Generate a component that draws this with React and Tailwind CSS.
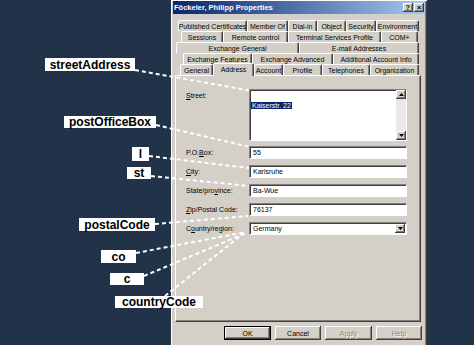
const TAB_ROWS = [
  { pad: 'pl-[7px]', tabs: [
    ['Published Certificates', 'w-[69px]'], ['Member Of', 'w-[41px]'], ['Dial-in', 'w-[29px]'],
    ['Object', 'w-[29px]'], ['Security', 'w-[30px]'], ['Environment', 'w-[43px]'],
  ] },
  { pad: 'pl-[10px]', tabs: [
    ['Sessions', 'w-[42px]'], ['Remote control', 'w-[65px]'], ['Terminal Services Profile', 'w-[93px]'], ['COM+', 'w-[37px]'],
  ] },
  { pad: 'pl-[5px]', tabs: [['Exchange General', 'w-[123px]'], ['E-mail Addresses', 'w-[120px]']] },
  { pad: 'pl-[12px]', tabs: [
    ['Exchange Features', 'w-[69px]'], ['Exchange Advanced', 'w-[81px]'], ['Additional Account Info', 'w-[86px]'],
  ] },
  { pad: 'pl-[9px]', tabs: [
    ['General', 'w-[33px]'], ['Address', 'w-[41px]', true], ['Account', 'w-[29px]'],
    ['Profile', 'w-[39px]'], ['Telephones', 'w-[48px]'], ['Organization', 'w-[49px]'],
  ] },
]

const LABELS = [
  { t: 'streetAddress', c: 'left-[45px] top-[58px] w-[90px] h-[13px]' },
  { t: 'postOfficeBox', c: 'left-[64px] top-[116px] w-[92px] h-[12px]' },
  { t: 'l', c: 'left-[132px] top-[147px] w-[17px] h-[14px]' },
  { t: 'st', c: 'left-[127px] top-[167px] w-[24px] h-[12px]' },
  { t: 'postalCode', c: 'left-[79px] top-[218px] w-[76px] h-[13px]' },
  { t: 'co', c: 'left-[101px] top-[250px] w-[35px] h-[13px]' },
  { t: 'c', c: 'left-[110px] top-[273px] w-[34px] h-[12px]' },
  { t: 'countryCode', c: 'left-[115px] top-[296px] w-[88px] h-[12px]' },
]

const LINES = [
  [135, 70, 252, 91],
  [156, 125, 250, 147],
  [149, 156, 249, 168],
  [151, 176, 249, 186],
  [155, 224, 248, 216],
  [136, 253, 246, 232],
  [144, 276, 246, 233],
  [165, 296, 244, 233],
]

const raised = 'bg-[#d4d0c8] shadow-[inset_-1px_-1px_0_#404040,inset_1px_1px_0_#fff,inset_-2px_-2px_0_#808080]'
const sunken = 'bg-white border border-t-[#808080] border-l-[#808080] border-b-white border-r-white shadow-[inset_1px_1px_0_#404040]'

function Field({ label, children, tall }) {
  return (
    <div className="flex">
      <div className={`w-[63px] text-[7px] leading-none ${tall ? 'pt-[3px]' : 'flex items-center'}`}>{label}</div>
      {children}
    </div>
  )
}

function Input({ value, combo }) {
  return (
    <div className={`w-[158px] h-[13px] flex items-center ${sunken}`}>
      <span className="flex-1 pl-[3px] text-[7px] leading-none text-black">{value}</span>
      {combo && (
        <div className={`w-[10px] h-[9px] mr-[1px] flex items-center justify-center ${raised}`}>
          <svg width="5" height="3" viewBox="0 0 5 3"><path d="M0 0h5L2.5 3z" fill="#000"/></svg>
        </div>
      )}
    </div>
  )
}

export default function App() {
  return (
    <div className="relative w-[474px] h-[345px] overflow-hidden bg-[#213249] font-['Liberation_Sans',Arial,sans-serif] text-black">
      {/* dialog */}
      <div className="ml-[171px] w-[256px] h-[345px] pt-[1px] flex flex-col bg-[#d4d0c8] shadow-[inset_1px_1px_0_#fff,inset_-1px_0_0_#404040,inset_-2px_0_0_#808080]">
        <div className="mx-[2px] h-[13px] flex items-center bg-gradient-to-r from-[#0a246a] to-[#a6caf0]">
          <span className="flex-1 pl-[1px] text-[7.5px] font-bold text-white leading-none">Föckeler, Philipp Properties</span>
          <div className={`w-[10px] h-[9px] flex items-center justify-center text-[7px] font-bold leading-none ${raised}`}>?</div>
          <div className={`w-[10px] h-[9px] ml-[1px] mr-[1px] flex items-center justify-center text-[8px] font-bold leading-none ${raised}`}>×</div>
        </div>

        <div className="mt-[6px] flex flex-col">
          {TAB_ROWS.map((row, i) => (
            <div key={i} className={`flex items-end h-[11px] ${row.pad}`}>
              {row.tabs.map(([name, w, sel]) => (
                <div
                  key={name}
                  className={`${w} flex items-center justify-center text-[7px] leading-none whitespace-nowrap bg-[#d4d0c8] rounded-t-[2px] border-l border-t border-white border-r border-r-[#404040] shadow-[inset_-1px_0_0_#808080] ${sel ? 'h-[13px] relative top-[1px] z-10 pb-[2px]' : 'h-[11px]'}`}
                >
                  {name}
                </div>
              ))}
            </div>
          ))}
        </div>

        <div className="ml-[4px] w-[246px] h-[247px] pt-[13px] pl-[10px] flex flex-col gap-[6px] border border-t-white border-l-white border-r-[#404040] border-b-[#404040] shadow-[inset_-1px_-1px_0_#808080]">
          <div className="mb-[-1px]">
            <Field label={<><u>S</u>treet:</>} tall>
              <div className={`w-[158px] h-[52px] flex ${sunken}`}>
                <div className="flex-1 pl-[1px] pt-[1px]">
                  <span className="bg-[#0a246a] text-white text-[7px] leading-none px-[1px]">Kaiserstr. 22</span>
                </div>
                <div className="w-[10px] flex flex-col bg-[#ebe9e5]">
                  <div className={`h-[9px] flex items-center justify-center ${raised}`}>
                    <svg width="5" height="3" viewBox="0 0 5 3"><path d="M0 3h5L2.5 0z" fill="#000"/></svg>
                  </div>
                  <div className="flex-1" />
                  <div className={`h-[9px] flex items-center justify-center ${raised}`}>
                    <svg width="5" height="3" viewBox="0 0 5 3"><path d="M0 0h5L2.5 3z" fill="#000"/></svg>
                  </div>
                </div>
              </div>
            </Field>
          </div>
          <Field label={<>P.O. <u>B</u>ox:</>}><Input value="55" /></Field>
          <Field label={<><u>C</u>ity:</>}><Input value="Karlsruhe" /></Field>
          <Field label={<>State/pro<u>v</u>ince:</>}><Input value="Ba-Wue" /></Field>
          <Field label={<><u>Z</u>ip/Postal Code:</>}><Input value="76137" /></Field>
          <Field label={<>C<u>o</u>untry/region:</>}><Input value="Germany" combo /></Field>
        </div>

        <div className="mt-[4px] mr-[5px] flex justify-end gap-[4px]">
          <button className={`w-[47px] h-[14px] text-[7px] leading-none text-black border border-black ${raised}`}>OK</button>
          <button className={`w-[46px] h-[14px] text-[7px] leading-none text-black ${raised}`}>Cancel</button>
          <button className={`w-[47px] h-[14px] text-[7px] leading-none text-[#808080] [text-shadow:1px_1px_0_#fff] ${raised}`}>Apply</button>
          <button className={`w-[46px] h-[14px] text-[7px] leading-none text-[#808080] [text-shadow:1px_1px_0_#fff] ${raised}`}>Help</button>
        </div>
      </div>

      {/* annotation lines */}
      <svg className="absolute left-0 top-0 pointer-events-none" width="474" height="345">
        {LINES.map(([x1, y1, x2, y2], i) => (
          <line key={i} x1={x1} y1={y1} x2={x2} y2={y2} stroke="#fff" strokeWidth="2" strokeDasharray="4 3" />
        ))}
      </svg>

      {LABELS.map(l => (
        <div key={l.t} className={`absolute ${l.c} bg-white flex items-center justify-center text-[12px] font-bold leading-none`}>
          {l.t}
        </div>
      ))}
    </div>
  )
}
